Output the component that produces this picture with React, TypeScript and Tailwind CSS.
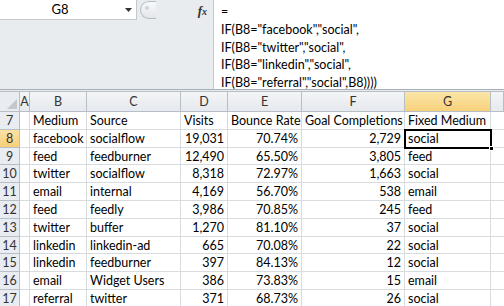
const rows: [number, string, string, string, string, string, string][] = [
  [8, 'facebook', 'socialflow', '19,031', '70.74%', '2,729', 'social'],
  [9, 'feed', 'feedburner', '12,490', '65.50%', '3,805', 'feed'],
  [10, 'twitter', 'socialflow', '8,318', '72.97%', '1,663', 'social'],
  [11, 'email', 'internal', '4,169', '56.70%', '538', 'email'],
  [12, 'feed', 'feedly', '3,986', '70.85%', '245', 'feed'],
  [13, 'twitter', 'buffer', '1,270', '81.10%', '37', 'social'],
  [14, 'linkedin', 'linkedin-ad', '665', '70.08%', '22', 'social'],
  [15, 'linkedin', 'feedburner', '397', '84.13%', '12', 'social'],
  [16, 'email', 'Widget Users', '386', '73.83%', '15', 'email'],
  [17, 'referral', 'twitter', '371', '68.73%', '26', 'social'],
]

const formula = [
  '=',
  'IF(B8="facebook","social",',
  'IF(B8="twitter","social",',
  'IF(B8="linkedin","social",',
  'IF(B8="referral","social",B8))))',
]

const cols = 'grid grid-cols-[20px_10px_57px_94px_47px_74px_103px_86px_1fr]'

function Cell({ children, right, className = '' }: { children?: React.ReactNode; right?: boolean; className?: string }) {
  return (
    <div
      className={`h-[17.8px] border-r border-b border-[#d9dcdf] px-[3px] leading-[17px] whitespace-nowrap overflow-visible ${right ? 'text-right' : 'text-left'} ${className}`}
    >
      {children}
    </div>
  )
}

function RowHead({ n, active }: { n: number; active?: boolean }) {
  return (
    <div
      className={`h-[17.8px] border-r border-b border-[#b8bec6] text-center leading-[17px] text-[#333] ${
        active ? 'bg-gradient-to-b from-[#fbe2a4] to-[#f6cf77]' : 'bg-[#e9ecf0]'
      }`}
    >
      {n}
    </div>
  )
}

export default function App() {
  const heads = ['A', 'B', 'C', 'D', 'E', 'F', 'G', '']
  return (
    <div className="w-[504px] h-[306px] overflow-hidden bg-white text-[12.5px] text-black" style={{ fontFamily: 'Lato, "Open Sans", sans-serif' }}>
      {/* formula bar */}
      <div className="flex h-[90px] bg-[#e9ecef] border-b border-[#a9afb7]">
        <div className="w-[213px] flex flex-col">
          <div className="flex h-[20px] items-stretch">
            <div className="w-[137px] bg-white border-b border-r border-[#c3c8ce] relative flex items-center justify-center">
              <span className="text-[13px] -ml-[16px]">G8</span>
              <svg className="absolute right-[4px] top-[8px]" width="7" height="4" viewBox="0 0 7 4">
                <path d="M0 0h7L3.5 4z" fill="#333" />
              </svg>
            </div>
            <div className="flex-1 flex items-center relative">
              <div className="ml-[3px] w-[16px] h-[18px] rounded-l-full border border-r-0 border-[#b5bbc2] bg-gradient-to-b from-[#f7f8fa] to-[#e3e6ea]">
                <div className="ml-[4px] mt-[4px] w-[4px] h-[4px] rounded-full bg-[#d0d4d9]" />
              </div>
              <span className="absolute right-[6px] top-[1px] italic font-bold text-[#333] text-[13px]" style={{ fontFamily: '"Liberation Serif", serif' }}>
                f<span className="text-[10px]">x</span>
              </span>
            </div>
          </div>
        </div>
        <div className="flex-1 bg-white border-l border-[#c3c8ce] pl-[7px] pt-[3px]">
          {formula.map((l, i) => (
            <div key={i} className="leading-[17.8px] whitespace-nowrap">
              {l}
            </div>
          ))}
        </div>
      </div>
      <div className="h-[1px] bg-[#e9ecef]" />

      {/* grid */}
      <div className={`${cols} relative`}>
        <div className="h-[21px] bg-[#e9ecf0] border-t border-r border-b border-[#b8bec6] relative">
          <svg className="absolute right-[2px] bottom-[2px]" width="10" height="10" viewBox="0 0 10 10">
            <path d="M10 0V10H0z" fill="#c4c8cd" />
          </svg>
        </div>
        {heads.map((h, i) => (
          <div
            key={i}
            className={`h-[21px] border-t border-r border-b border-[#b8bec6] text-center leading-[19px] text-[#333] ${
              h === 'G' ? 'bg-gradient-to-b from-[#fbe6a8] to-[#f7d17a]' : 'bg-gradient-to-b from-[#f3f5f7] to-[#e6e9ed]'
            }`}
          >
            {h}
          </div>
        ))}

        <RowHead n={7} />
        <Cell />
        <Cell>Medium</Cell>
        <Cell>Source</Cell>
        <Cell>Visits</Cell>
        <Cell>Bounce Rate</Cell>
        <Cell>Goal Completions</Cell>
        <Cell>Fixed Medium</Cell>
        <Cell className="border-r-0" />

        {rows.map((r) => (
          <div key={r[0]} className="contents">
            <RowHead n={r[0]} active={r[0] === 8} />
            <Cell />
            <Cell>{r[1]}</Cell>
            <Cell>{r[2]}</Cell>
            <Cell right>{r[3]}</Cell>
            <Cell right>{r[4]}</Cell>
            <Cell right>{r[5]}</Cell>
            <Cell>{r[6]}</Cell>
            <Cell className="border-r-0" />
          </div>
        ))}

        {/* active cell G8 */}
        <div className="absolute left-[404px] top-[37.8px] w-[88px] h-[19.8px] border-2 border-black pointer-events-none">
          <div className="absolute -right-[4px] -bottom-[4px] w-[5px] h-[5px] bg-black border border-white" />
        </div>
      </div>
    </div>
  )
}
